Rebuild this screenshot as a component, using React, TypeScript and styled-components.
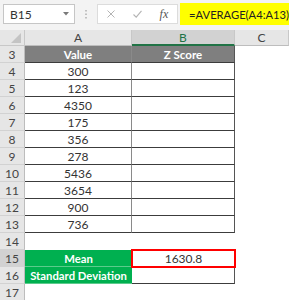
import React from 'react';
import styled, { createGlobalStyle, css } from 'styled-components';

const Global = createGlobalStyle`
  html, body { margin: 0; padding: 0; background: #ffffff; }
  body { font-family: Lato, "Liberation Sans", sans-serif; overflow: hidden; }
`;

const Page = styled.div`
  width: 289px;
  height: 300px;
  overflow: hidden;
  background: #ffffff;
`;

const Toolbar = styled.div`
  height: 30px;
  box-sizing: border-box;
  display: flex;
  align-items: flex-start;
  padding: 3px 0 0 3px;
  background: #f3f3f3;
`;

const NameBox = styled.div`
  width: 75px;
  height: 20px;
  margin-top: 1px;
  box-sizing: border-box;
  border: 1px solid #c6c6c6;
  background: #ffffff;
  display: flex;
  align-items: center;
  justify-content: space-between;
  padding: 0 5px 0 6px;
  font-size: 12px;
  color: #333333;
`;

const Separator = styled.div`
  width: 23px;
  height: 22px;
  display: flex;
  align-items: center;
  justify-content: center;
`;

const ButtonsBox = styled.div`
  width: 81px;
  height: 20px;
  margin-top: 1px;
  box-sizing: border-box;
  border: 1px solid #dcdcdc;
  background: #ffffff;
  display: flex;
  align-items: center;
`;

const IconSlot = styled.div`
  width: 27px;
  height: 18px;
  display: flex;
  align-items: center;
  justify-content: center;
`;

const Fx = styled.span`
  font-family: "Liberation Serif", serif;
  font-style: italic;
  font-size: 12px;
  color: #555555;
`;

const FormulaInput = styled.div`
  flex: 1;
  height: 22px;
  margin-left: 2px;
  background: #ffff00;
  display: flex;
  align-items: center;
  padding-left: 9px;
  font-size: 11.2px;
  color: #222222;
`;

const Grid = styled.div`
  display: grid;
  grid-template-columns: 25px 107px 103px 54px;
  grid-template-rows: 16px;
  grid-auto-rows: 17px;
`;

const Corner = styled.div`
  background: #e6e6e6;
  box-sizing: border-box;
  border-right: 1px solid #c8c8c8;
  border-bottom: 1px solid #c8c8c8;
  display: flex;
  align-items: flex-end;
  justify-content: flex-end;
  padding: 0 3px 2px 0;
`;

const ColHeader = styled.div<{ $active?: boolean }>`
  box-sizing: border-box;
  display: flex;
  align-items: center;
  justify-content: center;
  font-size: 12px;
  color: #444444;
  background: #e6e6e6;
  border-right: 1px solid #c8c8c8;
  border-bottom: 1px solid #bdbdbd;
  ${(p) =>
    p.$active &&
    css`
      background: #d2d2d2;
      color: #217346;
      border-bottom: 2px solid #217346;
    `}
`;

const RowHeader = styled.div<{ $active?: boolean }>`
  box-sizing: border-box;
  display: flex;
  align-items: center;
  justify-content: center;
  font-size: 12px;
  color: #444444;
  background: ${(p) => (p.$active ? '#d2d2d2' : '#e6e6e6')};
  border-right: 1px solid #bdbdbd;
  border-bottom: 1px solid #d2d2d2;
`;

type Tone = 'head' | 'green' | 'plain' | 'none';

const Cell = styled.div<{ $tone: Tone; $col: 'a' | 'b' | 'c'; $selected?: boolean }>`
  box-sizing: border-box;
  display: flex;
  align-items: center;
  justify-content: center;
  white-space: nowrap;
  font-size: 12px;
  color: #333333;
  background: #ffffff;
  ${(p) =>
    (p.$tone === 'plain' || p.$tone === 'head') &&
    css`
      border-bottom: 1px solid #3c3c3c;
      border-right: 1px solid ${p.$col === 'a' ? '#8a8a8a' : '#555555'};
    `}
  ${(p) =>
    p.$tone === 'head' &&
    css`
      background: #7f7f7f;
      color: #ffffff;
      font-weight: 700;
      font-size: 11.5px;
    `}
  ${(p) =>
    p.$tone === 'green' &&
    css`
      background: #00b050;
      color: #ffffff;
      font-weight: 700;
      font-size: 11.3px;
      border-bottom: 1px solid #5ccb8c;
    `}
  ${(p) =>
    p.$selected &&
    css`
      border: none;
      box-shadow: inset 0 0 0 1px #ff0000, 0 0 0 1px #ff0000;
      position: relative;
      z-index: 1;
    `}
`;

type Row = { n: number; a?: string; b?: string; ta: Tone; tb: Tone; sel?: boolean };

const rows: Row[] = [
  { n: 3, a: 'Value', b: 'Z Score', ta: 'head', tb: 'head' },
  ...['300', '123', '4350', '175', '356', '278', '5436', '3654', '900', '736'].map(
    (v, i): Row => ({ n: 4 + i, a: v, b: '', ta: 'plain', tb: 'plain' })
  ),
  { n: 14, ta: 'none', tb: 'none' },
  { n: 15, a: 'Mean', b: '1630.8', ta: 'green', tb: 'plain', sel: true },
  { n: 16, a: 'Standard Deviation', b: '', ta: 'green', tb: 'plain' },
  { n: 17, ta: 'none', tb: 'none' },
];

export default function App() {
  return (
    <Page>
      <Global />
      <Toolbar>
        <NameBox>
          <span>B15</span>
          <svg width="6" height="4" viewBox="0 0 6 4">
            <path d="M0 0 L6 0 L3 3.5 Z" fill="#7a7a7a" />
          </svg>
        </NameBox>
        <Separator>
          <svg width="2" height="9" viewBox="0 0 2 9">
            <rect x="0" y="0" width="2" height="1.5" fill="#c0c0c0" />
            <rect x="0" y="3.5" width="2" height="1.5" fill="#c0c0c0" />
            <rect x="0" y="7" width="2" height="1.5" fill="#c0c0c0" />
          </svg>
        </Separator>
        <ButtonsBox>
          <IconSlot>
            <svg width="8" height="8" viewBox="0 0 8 8">
              <path d="M0.5 0.5 L7.5 7.5 M7.5 0.5 L0.5 7.5" stroke="#b4b4b4" strokeWidth="1" />
            </svg>
          </IconSlot>
          <IconSlot>
            <svg width="9" height="8" viewBox="0 0 9 8">
              <path d="M0.5 4.5 L3.2 7.2 L8.5 0.8" stroke="#b4b4b4" strokeWidth="1.1" fill="none" />
            </svg>
          </IconSlot>
          <IconSlot>
            <Fx>fx</Fx>
          </IconSlot>
        </ButtonsBox>
        <FormulaInput>=AVERAGE(A4:A13)</FormulaInput>
      </Toolbar>
      <Grid>
        <Corner>
          <svg width="10" height="10" viewBox="0 0 10 10">
            <path d="M10 0 L10 10 L0 10 Z" fill="#c4c4c4" />
          </svg>
        </Corner>
        <ColHeader>A</ColHeader>
        <ColHeader $active>B</ColHeader>
        <ColHeader>C</ColHeader>
        {rows.map((r) => (
          <React.Fragment key={r.n}>
            <RowHeader $active={r.sel}>{r.n}</RowHeader>
            <Cell $tone={r.ta} $col="a">{r.a}</Cell>
            <Cell $tone={r.tb} $col="b" $selected={r.sel}>{r.b}</Cell>
            <Cell $tone="none" $col="c" />
          </React.Fragment>
        ))}
      </Grid>
    </Page>
  );
}
